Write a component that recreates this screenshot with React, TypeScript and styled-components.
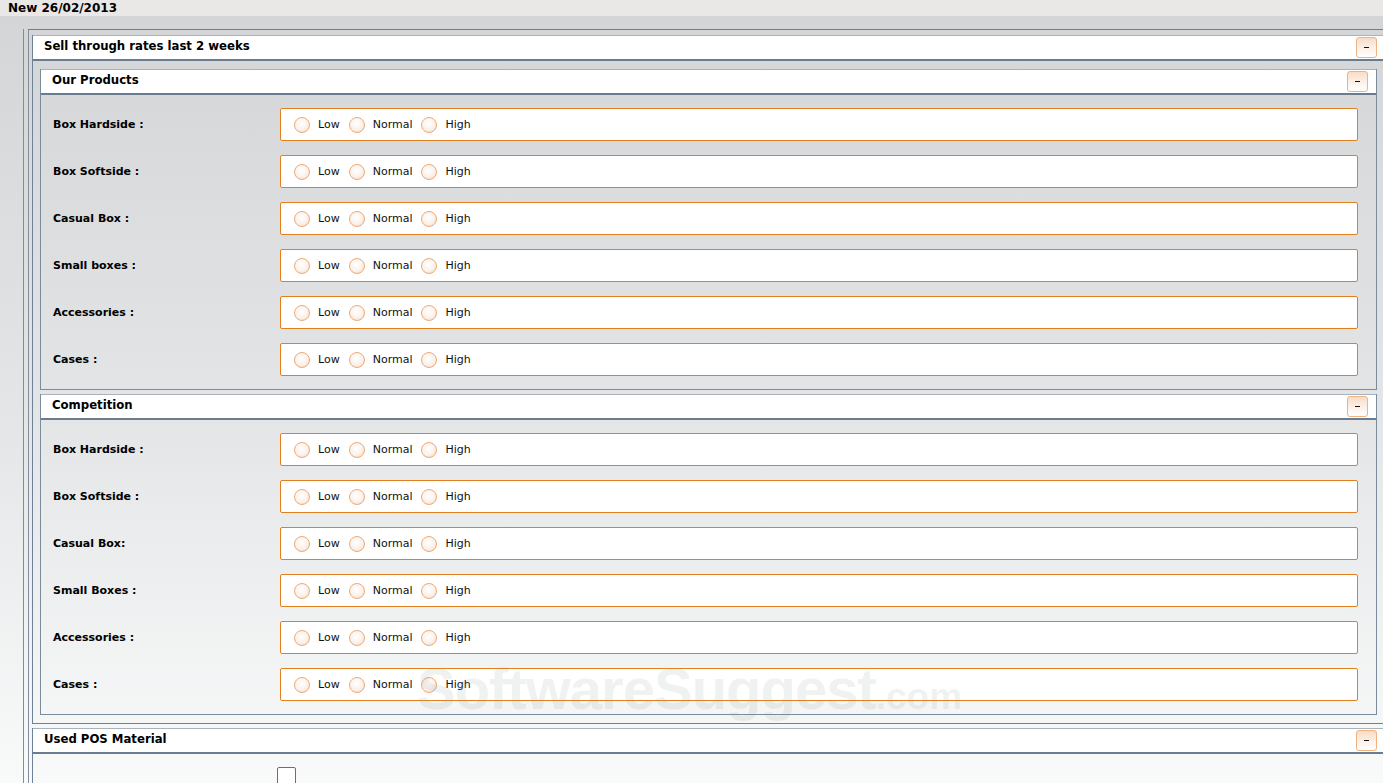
import React from 'react';
import styled, { createGlobalStyle } from 'styled-components';

const GlobalStyle = createGlobalStyle`
  html, body {
    margin: 0;
    padding: 0;
    height: 100%;
    overflow: hidden;
  }
  body {
    font-family: "DejaVu Sans", Verdana, sans-serif;
    background: #f9fafa;
    color: #000;
  }
`;

const Page = styled.div`
  width: 1383px;
  height: 783px;
  display: flex;
  flex-direction: column;
  overflow: hidden;
`;

const TopBar = styled.div`
  height: 16px;
  flex-shrink: 0;
  background: #eae8e6;
  padding-left: 8px;
  font-size: 12px;
  font-weight: bold;
  line-height: 16px;
`;

const Workspace = styled.div`
  position: relative;
  flex: 1;
  padding: 13px 0 0 23px;
  background: linear-gradient(to bottom, #d3d5d7 0%, #e4e5e6 50%, #fafbfb 100%);
`;

const Rail = styled.div`
  height: 100%;
  border-left: 1px solid #7d8e9e;
  padding-left: 4px;
`;

const Frame = styled.div`
  height: 100%;
  border-left: 1px solid #7d8e9e;
  border-top: 1px solid #6a7f93;
  padding: 5px 0 0 3px;
  margin-right: -6px;
`;

const Section = styled.div`
  border-left: 1px solid #6f8295;
  border-right: 1px solid #6f8295;
  border-bottom: 1px solid #6f8295;
  margin-right: 4px;
  & + & {
    margin-top: 4px;
  }
`;

const Header = styled.div<{ $outer?: boolean }>`
  height: 23px;
  background: #fff;
  border-top: 1px solid #a9b3bd;
  border-bottom: 2px solid #6a7d90;
  display: flex;
  align-items: center;
  justify-content: space-between;
  padding: 0 ${p => (p.$outer ? '7px' : '8px')} 0 11px;
  font-family: Tahoma, "DejaVu Sans Condensed", "DejaVu Sans", sans-serif;
  font-size: 13px;
  font-weight: bold;
`;

const Title = styled.span`
  margin-top: -4px;
`;

const MinusButton = styled.div`
  width: 21px;
  height: 21px;
  box-sizing: border-box;
  border: 1px solid #f0b27e;
  border-radius: 3px;
  background: linear-gradient(to bottom, #f9dcc6 0%, #fdf3ec 60%, #ffffff 100%);
  display: flex;
  align-items: center;
  justify-content: center;
  &::after {
    content: '';
    width: 5px;
    height: 1px;
    background: #111;
  }
`;

const SectionBody = styled.div`
  padding: 8px 7px 8px 7px;
`;

const Panel = styled.div`
  border: 1px solid #7a8b9b;
  border-top: none;
  & + & {
    margin-top: 4px;
  }
`;

const PanelBody = styled.div`
  padding: 13px 18px 13px 12px;
  display: flex;
  flex-direction: column;
  gap: 14px;
`;

const Row = styled.div`
  display: flex;
  align-items: center;
`;

const Label = styled.div<{ $width?: number }>`
  width: ${p => p.$width ?? 227}px;
  flex-shrink: 0;
  font-size: 11px;
  font-weight: bold;
`;

const RadioBox = styled.div`
  flex: 1;
  height: 33px;
  box-sizing: border-box;
  background: #fff;
  border: 1px solid #e2801f;
  border-radius: 2px;
  display: flex;
  align-items: center;
  padding-left: 13px;
`;

const Option = styled.label`
  display: flex;
  align-items: center;
  gap: 8px;
  margin-right: 9px;
  font-size: 11px;
  color: #111;
`;

const Radio = styled.span`
  width: 16px;
  height: 16px;
  box-sizing: border-box;
  border-radius: 50%;
  border: 1px solid #eeaa78;
  background: radial-gradient(circle at 45% 40%, #ffffff 0%, #fbf1ea 55%, #f1d4c0 100%);
`;

const PosBody = styled.div`
  padding: 13px 0 0 20px;
  height: 40px;
`;

const Checkbox = styled.span`
  display: block;
  width: 19px;
  height: 19px;
  box-sizing: border-box;
  border: 1px solid #7c6a5e;
  border-radius: 2px;
  background: #fff;
`;

const Watermark = styled.div`
  position: absolute;
  left: 417px;
  top: 639px;
  font-family: "Liberation Sans", Arial, sans-serif;
  font-weight: bold;
  font-size: 58px;
  letter-spacing: -1px;
  color: rgba(140, 145, 150, 0.13);
  pointer-events: none;
  white-space: nowrap;
`;

const Dot = styled.span`
  font-size: 37px;
  letter-spacing: 0;
`;

const ourProducts = [
  'Box Hardside :',
  'Box Softside :',
  'Casual Box :',
  'Small boxes :',
  'Accessories :',
  'Cases :',
];

const competition = [
  'Box Hardside :',
  'Box Softside :',
  'Casual Box:',
  'Small Boxes :',
  'Accessories :',
  'Cases :',
];

const levels = ['Low', 'Normal', 'High'];

const RateRow: React.FC<{ label: string }> = ({ label }) => (
  <Row>
    <Label>{label}</Label>
    <RadioBox>
      {levels.map(l => (
        <Option key={l}>
          <Radio />
          {l}
        </Option>
      ))}
    </RadioBox>
  </Row>
);

const RatePanel: React.FC<{ title: string; items: string[] }> = ({ title, items }) => (
  <Panel>
    <Header>
      <Title>{title}</Title>
      <MinusButton />
    </Header>
    <PanelBody>
      {items.map((it, i) => (
        <RateRow key={i} label={it} />
      ))}
    </PanelBody>
  </Panel>
);

export default function App() {
  return (
    <>
      <GlobalStyle />
      <Page>
        <TopBar>New 26/02/2013</TopBar>
        <Workspace>
          <Rail>
            <Frame>
              <Section>
                <Header $outer>
                  <Title>Sell through rates last 2 weeks</Title>
                  <MinusButton />
                </Header>
                <SectionBody>
                  <RatePanel title="Our Products" items={ourProducts} />
                  <RatePanel title="Competition" items={competition} />
                </SectionBody>
              </Section>
              <Section>
                <Header $outer>
                  <Title>Used POS Material</Title>
                  <MinusButton />
                </Header>
                <PosBody>
                  <Row>
                    <Label $width={224} />
                    <Checkbox />
                  </Row>
                </PosBody>
              </Section>
            </Frame>
          </Rail>
          <Watermark>
            SoftwareSuggest<Dot>.com</Dot>
          </Watermark>
        </Workspace>
      </Page>
    </>
  );
}
